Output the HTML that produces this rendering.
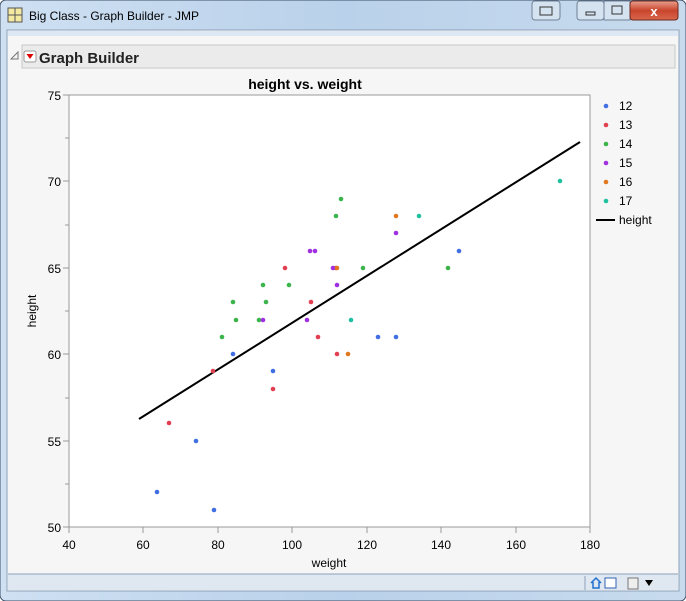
<!DOCTYPE html>
<html><head><style>
html,body{margin:0;padding:0;width:686px;height:601px;overflow:hidden;background:#fff}
svg text{font-family:"Liberation Sans",sans-serif}
</style></head><body>
<svg width="686" height="601" xmlns="http://www.w3.org/2000/svg">
<defs>
<linearGradient id="tb" x1="0" y1="0" x2="1" y2="0"><stop offset="0" stop-color="#cfe0f2"/><stop offset="0.5" stop-color="#b9d1ea"/><stop offset="1" stop-color="#c8dbee"/></linearGradient>
<linearGradient id="cl" x1="0" y1="0" x2="0" y2="1"><stop offset="0" stop-color="#e9a08f"/><stop offset="0.5" stop-color="#c9452c"/><stop offset="1" stop-color="#d9674e"/></linearGradient>
</defs>
<rect x="0" y="0" width="686" height="601" rx="6" fill="url(#tb)" stroke="#3c4f66"/>
<!-- icon -->
<rect x="8" y="8" width="14" height="14" fill="#f3e9a0" stroke="#555"/>
<line x1="15" y1="8" x2="15" y2="22" stroke="#555"/><line x1="8" y1="15" x2="22" y2="15" stroke="#555"/>
<text x="29" y="20" font-size="12" fill="#000">Big Class - Graph Builder - JMP</text>
<rect x="532" y="1" width="28" height="19" rx="3" fill="#d5e3f1" stroke="#6f8297"/>
<rect x="540" y="7" width="12" height="8" fill="none" stroke="#333"/>
<rect x="577" y="1" width="27" height="19" rx="3" fill="#d5e3f1" stroke="#6f8297"/>
<rect x="586" y="12" width="9" height="3" fill="none" stroke="#333"/>
<rect x="604" y="1" width="26" height="19" fill="#d5e3f1" stroke="#6f8297"/>
<rect x="612" y="6" width="10" height="8" fill="none" stroke="#333"/>
<rect x="630" y="1" width="48" height="19" rx="3" fill="url(#cl)" stroke="#6b2a20"/>
<text x="654" y="16" font-size="13" font-weight="bold" fill="#fff" text-anchor="middle">x</text>
<!-- client -->
<rect x="7" y="30" width="672" height="561" fill="#f6f6f6" stroke="#8da2bb"/>
<rect x="8" y="31" width="670" height="5" fill="#dde8f4"/>
<!-- header -->
<path d="M11 59 L18 52 L18 59 Z" fill="none" stroke="#777"/>
<rect x="22" y="45" width="653" height="23" fill="#ebebeb" stroke="#c8c8c8"/>
<rect x="24" y="51" width="12" height="11" rx="2" fill="#fff" stroke="#999"/>
<path d="M26.5 54 L33.5 54 L30 59 Z" fill="#d00"/>
<text x="39" y="63" font-size="15" font-weight="bold" fill="#222">Graph Builder</text>
<!-- title -->
<text x="305" y="89" font-size="14" font-weight="bold" text-anchor="middle" fill="#000">height vs. weight</text>
<!-- plot -->
<rect x="69" y="95" width="521" height="432" fill="#fff" stroke="#999"/>
<g stroke="#999">
<line x1="63" y1="95" x2="69" y2="95"/><line x1="65" y1="138" x2="69" y2="138"/>
<line x1="63" y1="181" x2="69" y2="181"/><line x1="65" y1="225" x2="69" y2="225"/>
<line x1="63" y1="268" x2="69" y2="268"/><line x1="65" y1="311" x2="69" y2="311"/>
<line x1="63" y1="354" x2="69" y2="354"/><line x1="65" y1="398" x2="69" y2="398"/>
<line x1="63" y1="441" x2="69" y2="441"/><line x1="65" y1="484" x2="69" y2="484"/>
<line x1="63" y1="527" x2="69" y2="527"/>
<line x1="69" y1="527" x2="69" y2="533"/><line x1="143" y1="527" x2="143" y2="533"/>
<line x1="218" y1="527" x2="218" y2="533"/><line x1="292" y1="527" x2="292" y2="533"/>
<line x1="367" y1="527" x2="367" y2="533"/><line x1="441" y1="527" x2="441" y2="533"/>
<line x1="516" y1="527" x2="516" y2="533"/><line x1="590" y1="527" x2="590" y2="533"/>
</g>
<g font-size="12" fill="#000" text-anchor="end">
<text x="61" y="100">75</text><text x="61" y="186">70</text><text x="61" y="273">65</text>
<text x="61" y="359">60</text><text x="61" y="446">55</text><text x="61" y="532">50</text>
</g>
<g font-size="12" fill="#000" text-anchor="middle">
<text x="69" y="549">40</text><text x="143" y="549">60</text><text x="218" y="549">80</text>
<text x="292" y="549">100</text><text x="367" y="549">120</text><text x="441" y="549">140</text>
<text x="516" y="549">160</text><text x="590" y="549">180</text>
<text x="329" y="567">weight</text>
</g>
<text transform="translate(36,311) rotate(-90)" font-size="12" text-anchor="middle">height</text>
<line x1="139" y1="419" x2="580" y2="142" stroke="#000" stroke-width="2"/>
<g fill="#3f6fe0">
<circle cx="157" cy="492" r="2.3"/><circle cx="196" cy="441" r="2.3"/><circle cx="214" cy="510" r="2.3"/><circle cx="233" cy="354" r="2.3"/><circle cx="273" cy="371" r="2.3"/><circle cx="378" cy="337" r="2.3"/><circle cx="396" cy="337" r="2.3"/><circle cx="459" cy="251" r="2.3"/>
</g>
<g fill="#e04050">
<circle cx="169" cy="423" r="2.3"/><circle cx="213" cy="371" r="2.3"/><circle cx="273" cy="389" r="2.3"/><circle cx="285" cy="268" r="2.3"/><circle cx="311" cy="302" r="2.3"/><circle cx="318" cy="337" r="2.3"/><circle cx="337" cy="354" r="2.3"/><circle cx="336" cy="268" r="2.3"/>
</g>
<g fill="#3cb44b">
<circle cx="222" cy="337" r="2.3"/><circle cx="233" cy="302" r="2.3"/><circle cx="236" cy="320" r="2.3"/><circle cx="259" cy="320" r="2.3"/><circle cx="263" cy="285" r="2.3"/><circle cx="266" cy="302" r="2.3"/><circle cx="289" cy="285" r="2.3"/><circle cx="336" cy="216" r="2.3"/><circle cx="341" cy="199" r="2.3"/><circle cx="363" cy="268" r="2.3"/><circle cx="448" cy="268" r="2.3"/>
</g>
<g fill="#a030e0">
<circle cx="263" cy="320" r="2.3"/><circle cx="307" cy="320" r="2.3"/><circle cx="310" cy="251" r="2.3"/><circle cx="315" cy="251" r="2.3"/><circle cx="333" cy="268" r="2.3"/><circle cx="337" cy="285" r="2.3"/><circle cx="396" cy="233" r="2.3"/>
</g>
<g fill="#e07820">
<circle cx="337" cy="268" r="2.3"/><circle cx="348" cy="354" r="2.3"/><circle cx="396" cy="216" r="2.3"/>
</g>
<g fill="#20c0a0">
<circle cx="351" cy="320" r="2.3"/><circle cx="419" cy="216" r="2.3"/><circle cx="560" cy="181" r="2.3"/>
</g>
<!-- legend -->
<circle cx="606" cy="106" r="2.3" fill="#3f6fe0"/><circle cx="606" cy="125" r="2.3" fill="#e04050"/>
<circle cx="606" cy="144" r="2.3" fill="#3cb44b"/><circle cx="606" cy="163" r="2.3" fill="#a030e0"/>
<circle cx="606" cy="182" r="2.3" fill="#e07820"/><circle cx="606" cy="201" r="2.3" fill="#20c0a0"/>
<line x1="596" y1="220" x2="615" y2="220" stroke="#000" stroke-width="2"/>
<g font-size="12" fill="#000">
<text x="619" y="110">12</text><text x="619" y="129">13</text><text x="619" y="148">14</text>
<text x="619" y="167">15</text><text x="619" y="186">16</text><text x="619" y="205">17</text>
<text x="619" y="224">height</text>
</g>
<!-- status bar -->
<rect x="8" y="574" width="670" height="16" fill="#dfe7f1"/>
<line x1="8" y1="574" x2="678" y2="574" stroke="#8da2bb"/>
<line x1="585" y1="576" x2="585" y2="590" stroke="#8da2bb"/>
<path d="M591 583 L596 578 L601 583 M593 582 L593 588 L599 588 L599 582" fill="none" stroke="#2070d0" stroke-width="1.5"/>
<rect x="605" y="578" width="11" height="10" fill="#fff" stroke="#3060b0"/>
<rect x="628" y="578" width="10" height="11" fill="#eee" stroke="#777"/>
<path d="M645 580 L653 580 L649 586 Z" fill="#000"/>
</svg>
</body></html>
